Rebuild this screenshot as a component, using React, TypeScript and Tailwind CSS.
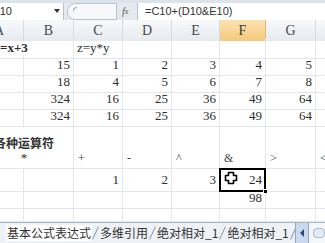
import type { ReactNode } from "react";

// Column A is partly scrolled off: the grid starts 25px left of the window
const GRID = "grid grid-cols-[49px_50px_49px_49px_48px_46px_50px_34px] -ml-[25px]";

const Cell = ({
  children,
  left = false,
  className = "",
}: {
  children?: ReactNode;
  left?: boolean;
  className?: string;
}) => (
  <div
    className={`flex items-center whitespace-nowrap border-b border-r border-[#e3e6ea] ${
      left ? "justify-start pl-[3px]" : "justify-end pr-[3px]"
    } ${className}`}
  >
    {children}
  </div>
);

const NumRow = ({ values }: { values: string[] }) => (
  <div className={`${GRID} h-[17px]`}>
    <Cell />
    {values.map((v, i) => (
      <Cell key={i}>{v}</Cell>
    ))}
    <Cell />
  </div>
);

const HEADERS = ["A", "B", "C", "D", "E", "F", "G", ""];
const TABS = ["基本公式表达式", "多维引用", "绝对相对_1", "绝对相对_1"];

export default function App() {
  return (
    <div className="relative h-[243px] w-[325px] overflow-hidden bg-white font-['Liberation_Serif',serif] text-[13px] text-[#2e2e2e]">
      {/* Formula bar */}
      <div className="flex h-[20px] border-t-[3px] border-[#dde3ea] bg-[#e4e9f0]">
        <div className="relative flex w-[64px] shrink-0 items-center overflow-hidden border-r border-[#b8c2cf] bg-white font-['Liberation_Sans',sans-serif] text-[11px] text-[#333]">
          <span className="-ml-[7px]">F10</span>
          <span className="absolute right-[3px] top-[6px] h-0 w-0 border-x-[3px] border-t-[4px] border-x-transparent border-t-[#333]" />
        </div>
        <div className="ml-[3px] flex w-[50px] shrink-0 items-center rounded-l-full border border-[#b8c2cf] bg-[#f6f8fa]">
          <span className="mb-[6px] ml-[5px] h-[4px] w-[4px] rounded-tl-full border-l border-t border-[#9aa6b4]" />
        </div>
        <div className="flex w-[5px] shrink-0" />
        <div className="flex w-[12px] shrink-0 items-center font-['Liberation_Serif',serif] text-[10px] italic text-[#555]">
          f<span className="text-[8px]">x</span>
        </div>
        <div className="ml-[3px] flex flex-1 items-center whitespace-nowrap border-l border-[#b8c2cf] bg-white pl-[7px] font-['Liberation_Sans',sans-serif] text-[11px] text-[#333]">
          =C10+(D10&amp;E10)
        </div>
      </div>

      {/* Column headers */}
      <div className={`${GRID} h-[18px] border-b border-[#c5cdd8]`}>
        {HEADERS.map((h, i) => (
          <div
            key={i}
            className={`flex items-center justify-center border-r text-[14px] ${
              h === "F"
                ? "border-[#e1b56b] bg-gradient-to-b from-[#fbe3b0] to-[#f4c97c] text-[#3a3a3a]"
                : "border-[#d5dbe3] bg-gradient-to-b from-[#f8f9fb] to-[#e6eaef] text-[#4a4a4a]"
            }`}
          >
            {h}
          </div>
        ))}
      </div>

      {/* Row 3 */}
      <div className={`${GRID} h-[17px]`}>
        <Cell left className="border-r-transparent pl-[25px] font-bold">
          =x+3
        </Cell>
        <Cell />
        <Cell left>z=y*y</Cell>
        <Cell />
        <Cell />
        <Cell />
        <Cell />
        <Cell />
      </div>
      <NumRow values={["15", "1", "2", "3", "4", "5"]} />
      <NumRow values={["18", "4", "5", "6", "7", "8"]} />
      <NumRow values={["324", "16", "25", "36", "49", "64"]} />
      <NumRow values={["324", "16", "25", "36", "49", "64"]} />

      {/* Operators row */}
      <div className={`${GRID} h-[46px]`}>
        <div className="col-span-2 flex flex-col items-center justify-end border-b border-r border-[#e3e6ea] pb-[3px] leading-[15px]">
          <span className="font-['Noto_Sans_CJK_SC',sans-serif] text-[12px] font-bold text-[#333]">各种运算符</span>
          <span>*</span>
        </div>
        {["+", "-", "^", "&", ">", "<"].map((op, i) => (
          <div
            key={i}
            className="flex items-end border-b border-r border-[#e3e6ea] pb-[1px] pl-[4px] text-[12px] text-[#444]"
          >
            {op}
          </div>
        ))}
      </div>

      {/* Row 10 */}
      <div className={`${GRID} h-[19px]`}>
        <Cell />
        <Cell />
        <Cell>1</Cell>
        <Cell>2</Cell>
        <Cell>3</Cell>
        <div className="relative -ml-[1px] -mt-[1px] flex items-center justify-end border-2 border-black pr-[2px]">
          24
          <svg
            className="absolute left-[3px] top-[1px]"
            width="14"
            height="14"
            viewBox="0 0 14 14"
          >
            <path
              d="M4.5 1.5h5v3h3v5h-3v3h-5v-3h-3v-5h3z"
              fill="white"
              stroke="black"
              strokeWidth="1.6"
              strokeLinejoin="round"
            />
          </svg>
          <span className="absolute -bottom-[4px] -right-[4px] h-[5px] w-[5px] border border-white bg-black" />
        </div>
        <Cell />
        <Cell />
      </div>

      <div className={`${GRID} h-[17px]`}>
        <Cell />
        <Cell />
        <Cell />
        <Cell />
        <Cell />
        <Cell>98</Cell>
        <Cell />
        <Cell />
      </div>
      <NumRow values={["", "", "", "", "", ""]} />

      {/* Sheet tabs + scroll bar */}
      <div className="flex h-[21px] border-t border-[#a9b6c6] bg-[#eef1f5] font-['Noto_Sans_CJK_SC',sans-serif] text-[12px] text-[#333]">
        <div className="flex min-w-0 flex-1 items-center overflow-hidden whitespace-nowrap pl-[6px]">
          {TABS.map((t, i) => (
            <div key={i} className="flex shrink-0 items-center">
              <span className={`px-[1px] leading-[16px] ${i === 0 ? "bg-white" : ""}`}>{t}</span>
              <span className="mx-[3px] h-[14px] w-px rotate-[25deg] bg-[#8796aa]" />
            </div>
          ))}
        </div>
        <div className="flex w-[14px] shrink-0 items-center justify-center border-x border-[#8fa6c4] bg-[#c9d9ee]">
          <span className="h-0 w-0 border-y-[4px] border-r-[4px] border-y-transparent border-r-[#2d4a74]" />
        </div>
        <div className="flex w-[16px] shrink-0 items-center bg-[#f4f6f9] pl-[4px]">
          <span className="h-[10px] w-[12px] rounded-sm border border-[#a9b9cd] bg-[#e4ebf4]" />
        </div>
      </div>
    </div>
  );
}
